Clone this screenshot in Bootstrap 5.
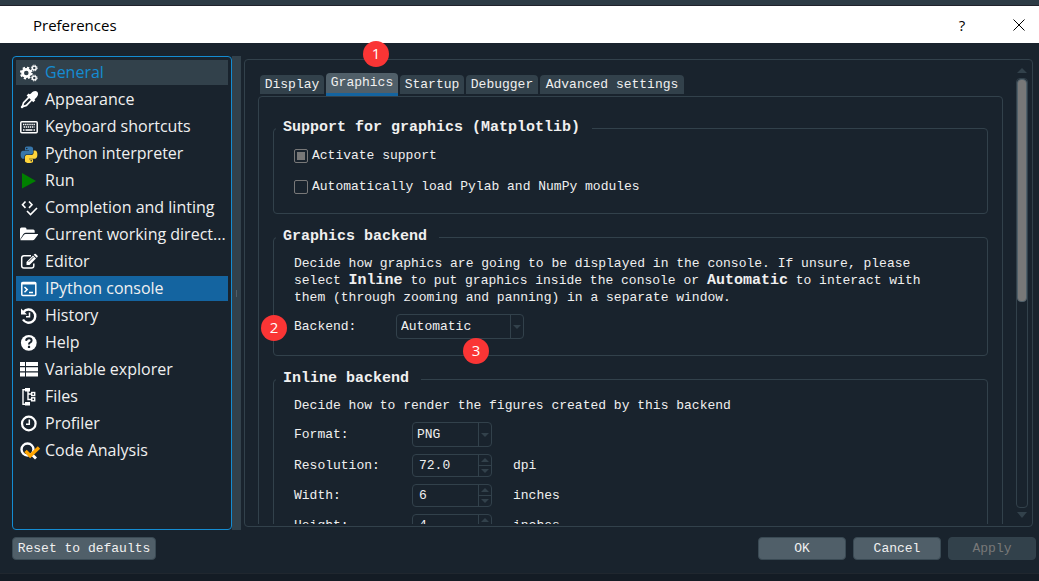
<!DOCTYPE html>
<html lang="en">
<head>
<meta charset="utf-8">
<meta name="viewport" content="width=device-width, initial-scale=1">
<title>Preferences</title>
<link href="https://cdn.jsdelivr.net/npm/bootstrap@5.3.0/dist/css/bootstrap.min.css" rel="stylesheet">
<style>
:root { --base:#19232d; --line:#32414b; --btn:#505f69; --txt:#f0f0f0; --blue:#1464a0; --sky:#148cd2; }
body { background:var(--base); color:var(--txt); font:13px/20px "Liberation Mono", monospace; overflow:hidden; }
.strip-top { height:6px; background:#2d3b45; border-bottom:1px solid #20222b; }
.strip-bottom { height:8px; background:#141c25; border-top:1px solid #20272f; }
.titlebar { height:37px; background:#fff; color:#000; font:15px/20px "Open Sans", sans-serif; padding:0 12px 0 33px; gap:41px; }
.titlebar button { border:0; background:none; padding:0; color:#000; width:16px; height:24px; font:15px/24px "Open Sans", sans-serif; }
.titlebar svg { display:block; margin:auto; }
.work { padding:13px 6px 0 12px; min-height:0; }
.side { width:220px; border:1px solid var(--sky); border-radius:4px; padding:3px; }
.side a { height:25px; margin-bottom:2px; padding:0 4px; gap:7px; color:var(--txt); text-decoration:none; font:16px/25px "Open Sans", sans-serif; white-space:nowrap; }
.side a.hovered { background:var(--line); color:var(--sky); }
.side a.active { background:var(--blue); }
.side svg { width:18px; height:18px; flex:none; }
.splitter { width:9px; background:var(--line); }
.splitter i { width:1px; height:7px; background:#505f69; }
.panel { margin:3px 0 3px 3px; border:1px solid var(--line); border-radius:4px; padding:2px; min-width:0; }
.view { overflow:hidden; padding:11px 13px 0 11px; }
.tabs { gap:2px; padding-left:2px; height:23px; }
.tabs button { border:0; background:var(--line); color:var(--txt); padding:0 3px; height:19px; margin-bottom:2px; line-height:20px; border-radius:4px 4px 0 0; text-align:center; white-space:nowrap; }
.tabs button.active { background:var(--btn); height:23px; margin:0; border-bottom:3px solid var(--blue); }
.w-s { width:64px; } .w-m { width:72px; } .w-l { width:144px; }
.pane { border:1px solid var(--line); border-radius:4px; padding:21px 14px 0; height:600px; }
fieldset { border:1px solid var(--line) !important; border-radius:4px; padding:0 2px; margin-bottom:13px; }
legend { float:none; width:auto; margin:0; padding:0 12px 0 7px; font-size:15px; line-height:20px; font-weight:700; }
.inside { padding:8px 18px 16px; }
strong { font-size:15px; line-height:17px; }
.hint { line-height:17px; margin:0 0 8px; }
.ticks { gap:11px; }
.tick { gap:4px; height:20px; }
.tick input { width:14px; height:14px; margin:0; border:1px solid #787878; border-radius:2px; background:transparent; appearance:none; }
.tick input.partial { background:#787878 content-box; padding:2px; }
.combo, .spin { position:relative; border:1px solid var(--line); border-radius:4px; height:25px; width:80px; }
.combo.wide { width:128px; }
.spin { height:23px; }
.combo select, .spin input { border:0; background:transparent; color:var(--txt); appearance:none; padding:0 4px; flex:1; min-width:0; font-size:13px; outline:0; }
.spin input { padding-left:6px; }
.arrow { width:13px; border-left:1px solid var(--line); }
.spin .arrow button { border:0; background:none; padding:0; flex:1; width:12px; line-height:0; }
.spin .arrow button + button { border-top:1px solid var(--line); }
.arrow svg { width:8px; height:4px; fill:var(--line); }
.backend-label { width:102px; }
.form-grid { display:grid; grid-template-columns:118px 80px 1fr; row-gap:7px; align-items:center; }
.form-grid .unit { padding-left:21px; }
.pin { position:absolute; width:26px; height:26px; border-radius:50%; background:#fa3535; color:#fff; font:15px/24px "Open Sans", sans-serif; text-align:center; z-index:2; }
.pin-tab { left:118px; top:-19px; }
.pin-label { left:-33px; top:1px; }
.pin-combo { left:66px; top:23px; }
.scroller { width:12px; padding:6px 0 6px; margin-right:2px; }
.scroller svg { width:10px; height:6px; fill:var(--line); flex:none; }
.track { width:12px; border:1px solid var(--line); border-radius:4px; margin:4px 0; }
.thumb { height:52%; background:#787878; border:1px solid #50606a; border-radius:4px; }
.foot { padding:7px 3px 13px 12px; gap:7px; }
.foot button { height:23px; width:88px; border:1px solid #3a4a54; border-radius:4px; background:var(--btn); color:var(--txt); padding:0; line-height:21px; }
.foot .reset { width:144px; }
.foot button:disabled { background:var(--line); border-color:var(--line); color:#787878; }
</style>
</head>
<body>
<div class="d-flex flex-column vh-100">
  <div class="strip-top flex-shrink-0"></div>
  <header class="titlebar d-flex align-items-center flex-shrink-0">
    <span class="me-auto">Preferences</span>
    <button type="button" aria-label="Help">?</button>
    <button type="button" aria-label="Close"><svg width="12" height="12" viewBox="0 0 12 12" stroke="#000" fill="none"><path d="M.5.5l11 11M11.5.5l-11 11"/></svg></button>
  </header>

  <main class="work d-flex flex-grow-1">
    <nav class="side flex-shrink-0">
      <a href="#" class="hovered d-flex align-items-center"><svg viewBox="0 0 18 18" fill="none" stroke="#fff"><circle cx="6.3" cy="9" r="3.7" stroke-width="2.8"/><circle cx="6.3" cy="9" r="5.4" stroke-width="2" stroke-dasharray="2.3 1.94"/><circle cx="14.3" cy="4" r="1.9" stroke-width="1.4"/><circle cx="14.3" cy="4" r="2.9" stroke-width="1" stroke-dasharray="1.3 .98"/><circle cx="14.3" cy="14" r="1.9" stroke-width="1.4"/><circle cx="14.3" cy="14" r="2.9" stroke-width="1" stroke-dasharray="1.3 .98"/></svg>General</a>
      <a href="#" class="d-flex align-items-center"><svg viewBox="0 0 18 18"><path fill="#fff" d="M11 2.500c2.500-3 5-2.800 6.200-1.700S18.500 4.500 16 7l-1.500 1.200.8 1-2 2-6.700-6.700 2-2 1 .8z"/><path d="M9 6.200L3.600 11.600 2.300 15.700l4.100-1.300L11.700 9" fill="none" stroke="#fff" stroke-width="1.700"/><path d="M2.500 14l1.600 1.600L2 17.500.6 16z" fill="#fff"/></svg>Appearance</a>
      <a href="#" class="d-flex align-items-center"><svg viewBox="0 0 18 18"><rect x=".8" y="3.700" width="16.400" height="11" rx="1" fill="none" stroke="#fff" stroke-width="1.500"/><path stroke="#fff" stroke-width="1.300" d="M3 6.500h12M3.600 9h11" stroke-dasharray="1.400 .7"/><path stroke="#fff" stroke-width="1.400" d="M3 12h1.500M5.500 12h7M13.500 12H15"/></svg>Keyboard shortcuts</a>
      <a href="#" class="d-flex align-items-center"><svg viewBox="-1 -2 26 26"><path fill="#3776ab" d="M14.250.180l.9.2.730.260.590.3.450.320.340.340.250.340.160.330.1.3.040.260.020.2-.010.130V8.500l-.050.630-.130.550-.210.460-.260.380-.3.310-.330.250-.350.190-.350.140-.330.1-.3.070-.260.040-.210.020H8.770l-.690.050-.590.140-.5.220-.410.270-.330.320-.270.350-.2.360-.150.370-.1.350-.070.320-.040.270-.020.210v3.060H3.170l-.210-.030-.280-.070-.320-.120-.350-.180-.360-.260-.360-.360-.350-.460-.320-.590-.280-.730-.210-.880-.140-1.050-.050-1.230.060-1.220.160-1.040.240-.870.320-.710.360-.570.4-.440.420-.330.420-.240.4-.160.360-.1.320-.050.240-.010h.160l.060.010h8.160v-.830H6.180l-.010-2.750-.020-.370.050-.340.110-.310.170-.280.250-.260.310-.230.380-.2.440-.180.510-.150.580-.120.640-.1.710-.060.770-.040.840-.020 1.270.050z"/><circle cx="8.800" cy="3.100" r="1.100" fill="#19232d"/><g transform="rotate(180 12 12)"><path fill="#ffd43b" d="M14.250.180l.9.2.730.260.590.3.450.320.340.340.250.340.160.330.1.3.040.260.020.2-.010.130V8.500l-.050.630-.130.550-.210.460-.260.380-.3.310-.330.250-.350.190-.350.140-.330.1-.3.070-.260.040-.210.020H8.770l-.690.050-.590.140-.5.220-.410.270-.330.320-.270.350-.2.360-.150.370-.1.350-.070.320-.040.270-.020.210v3.060H3.170l-.210-.030-.280-.070-.320-.120-.350-.180-.360-.260-.360-.360-.350-.460-.320-.590-.280-.730-.210-.880-.140-1.050-.050-1.230.060-1.220.160-1.040.240-.870.320-.710.360-.570.4-.440.420-.330.420-.240.4-.160.360-.1.320-.050.240-.010h.160l.060.010h8.160v-.830H6.180l-.010-2.750-.020-.370.050-.340.110-.310.170-.280.250-.260.310-.230.380-.2.440-.180.510-.150.580-.120.640-.1.710-.060.770-.040.840-.020 1.270.050z"/><circle cx="8.800" cy="3.100" r="1.100" fill="#19232d"/></g></svg>Python interpreter</a>
      <a href="#" class="d-flex align-items-center"><svg viewBox="0 0 18 18"><path fill="#008000" d="M2 1l14 8L2 16.500z"/></svg>Run</a>
      <a href="#" class="d-flex align-items-center"><svg viewBox="0 0 18 18" fill="none" stroke="#fff" stroke-width="1.600"><path d="M5.500 2.500L2.500 5.700l3 3.200M9 2.500l3 3.200-3 3.200M7 12l3.500 3.500L17 9"/></svg>Completion and linting</a>
      <a href="#" class="d-flex align-items-center"><svg viewBox="0 0 18 18" fill="#fff"><path d="M0 13.500V3q0-1.500 1.500-1.500h3.700Q6.500 1.500 6.500 3v.5h6.700q1.500 0 1.500 1.500v1.700H6q-1.500 0-2.600 1.200z"/><path d="M5.600 8h12q1 0 .2 1l-3.200 4.300q-.7 1-2 1H1q-1 0-.3-1l3.100-4.200Q4.600 8 5.600 8z"/></svg>Current working direct...</a>
      <a href="#" class="d-flex align-items-center"><svg viewBox="0 0 18 18"><path d="M11 2.700H4Q1.700 2.700 1.700 5v7.700Q1.700 15 4 15h7.500q2.300 0 2.300-2.300V10.500" fill="none" stroke="#fff" stroke-width="1.500"/><path fill="#fff" d="M6.500 12V9L13 2.500l3 3L9.500 12zM13.700 1.800l.8-.8q.7-.5 1.300 0l1.700 1.700q.5.700 0 1.300l-.8.800z"/><path stroke="#19232d" stroke-width=".8" d="M8.500 9l5-5"/></svg>Editor</a>
      <a href="#" class="active d-flex align-items-center" aria-current="page"><svg viewBox="0 0 18 18" fill="none" stroke="#fff"><rect x="1.800" y="2.500" width="14" height="13" rx="1" stroke-width="1.500"/><path d="M1.500 3.500h14.500" stroke-width="2"/><path d="M4.500 7l2.700 2.600-2.700 2.600M9 12.500h4" stroke-width="1.500"/></svg>IPython console</a>
      <a href="#" class="d-flex align-items-center"><svg viewBox="0 0 18 18"><path d="M3.500 5A6.600 6.600 0 1 1 3 12.500" fill="none" stroke="#fff" stroke-width="2.400"/><path fill="#fff" d="M1 1.500v6h6z"/><path d="M9.500 5.500v4.300H6" fill="none" stroke="#fff" stroke-width="1.500"/></svg>History</a>
      <a href="#" class="d-flex align-items-center"><svg viewBox="0 0 18 18"><circle cx="8.800" cy="8.800" r="7.900" fill="#fff"/><path d="M6 6.800Q6.500 4.300 9 4.300t2.600 2.200Q11.600 8 10 8.600 9 9 9 10.500" fill="none" stroke="#19232d" stroke-width="2"/><path fill="#19232d" d="M7.900 11.800h2.200V14H7.900z"/></svg>Help</a>
      <a href="#" class="d-flex align-items-center"><svg viewBox="0 0 18 18" fill="#fff"><path d="M0 1h5v4H0zM6 1h12v4H6zM0 6.200h5v4H0zM6 6.200h12v4H6zM0 11.400h5v4H0zM6 11.400h12v4H6z"/></svg>Variable explorer</a>
      <a href="#" class="d-flex align-items-center"><svg viewBox="0 0 18 18" fill="none" stroke="#fff"><path d="M5.500 1.700H3v14.500h2.500M8 3v8.500h3M8 6h3" stroke-width="1.400"/><path fill="#fff" stroke="none" d="M5 0h5v3.500H5zM5 14h5v3.500H5z"/><rect x="11.700" y="4.500" width="3" height="3" stroke-width="1.400"/><rect x="11.700" y="9.800" width="3" height="3" stroke-width="1.400"/></svg>Files</a>
      <a href="#" class="d-flex align-items-center"><svg viewBox="0 0 18 18" fill="none" stroke="#fff"><circle cx="8.800" cy="8.500" r="6.800" stroke-width="2.200"/><path d="M9.300 4.500v4.800H6" stroke-width="1.500"/></svg>Profiler</a>
      <a href="#" class="d-flex align-items-center"><svg viewBox="0 0 18 18" fill="none" overflow="visible"><circle cx="7.500" cy="7.500" r="6" stroke="#fff" stroke-width="2.400"/><path d="M11 11.500l5 5" stroke="#fff" stroke-width="2.800"/><path d="M5.500 9l4.700 4.800L19 5.500" stroke="#ffa500" stroke-width="3.400"/></svg>Code Analysis</a>
    </nav>
    <div class="splitter d-flex align-items-center justify-content-center flex-shrink-0"><i></i></div>

    <section class="panel position-relative d-flex flex-grow-1">
      <span class="pin pin-tab">1</span>
      <div class="view flex-grow-1">
        <div class="tabs d-flex align-items-end" role="tablist">
          <button type="button" class="w-s" role="tab">Display</button>
          <button type="button" class="w-m active" role="tab" aria-selected="true">Graphics</button>
          <button type="button" class="w-s" role="tab">Startup</button>
          <button type="button" class="w-m" role="tab">Debugger</button>
          <button type="button" class="w-l" role="tab">Advanced settings</button>
        </div>
        <div class="pane">
          <fieldset>
            <legend>Support for graphics (Matplotlib)</legend>
            <div class="inside ticks d-flex flex-column">
              <div class="tick d-flex align-items-center"><input type="checkbox" id="act" class="partial" checked><label for="act">Activate support</label></div>
              <div class="tick d-flex align-items-center"><input type="checkbox" id="pylab"><label for="pylab">Automatically load Pylab and NumPy modules</label></div>
            </div>
          </fieldset>
          <fieldset>
            <legend>Graphics backend</legend>
            <div class="inside">
              <p class="hint">Decide how graphics are going to be displayed in the console. If unsure, please<br>select <strong>Inline</strong> to put graphics inside the console or <strong>Automatic</strong> to interact with<br>them (through zooming and panning) in a separate window.</p>
              <div class="d-flex align-items-center position-relative">
                <span class="pin pin-label">2</span>
                <label for="backend" class="backend-label">Backend:</label>
                <div class="combo wide d-flex">
                  <select id="backend"><option>Automatic</option></select>
                  <span class="arrow d-flex align-items-center justify-content-center"><svg viewBox="0 0 8 4"><path d="M0 0h8L4 4z"/></svg></span>
                  <span class="pin pin-combo">3</span>
                </div>
              </div>
            </div>
          </fieldset>
          <fieldset>
            <legend>Inline backend</legend>
            <div class="inside">
              <p class="hint">Decide how to render the figures created by this backend</p>
              <div class="form-grid">
                <label for="fmt">Format:</label>
                <div class="combo d-flex"><select id="fmt"><option>PNG</option></select><span class="arrow d-flex align-items-center justify-content-center"><svg viewBox="0 0 8 4"><path d="M0 0h8L4 4z"/></svg></span></div>
                <span></span>
                <label for="res">Resolution:</label>
                <div class="spin d-flex"><input id="res" value="72.0"><span class="arrow d-flex flex-column"><button type="button" aria-label="Increase"><svg viewBox="0 0 8 4"><path d="M0 4h8L4 0z"/></svg></button><button type="button" aria-label="Decrease"><svg viewBox="0 0 8 4"><path d="M0 0h8L4 4z"/></svg></button></span></div>
                <span class="unit">dpi</span>
                <label for="wid">Width:</label>
                <div class="spin d-flex"><input id="wid" value="6"><span class="arrow d-flex flex-column"><button type="button" aria-label="Increase"><svg viewBox="0 0 8 4"><path d="M0 4h8L4 0z"/></svg></button><button type="button" aria-label="Decrease"><svg viewBox="0 0 8 4"><path d="M0 0h8L4 4z"/></svg></button></span></div>
                <span class="unit">inches</span>
                <label for="hei">Height:</label>
                <div class="spin d-flex"><input id="hei" value="4"><span class="arrow d-flex flex-column"><button type="button" aria-label="Increase"><svg viewBox="0 0 8 4"><path d="M0 4h8L4 0z"/></svg></button><button type="button" aria-label="Decrease"><svg viewBox="0 0 8 4"><path d="M0 0h8L4 4z"/></svg></button></span></div>
                <span class="unit">inches</span>
              </div>
            </div>
          </fieldset>
        </div>
      </div>
      <div class="scroller d-flex flex-column align-items-center flex-shrink-0">
        <svg viewBox="0 0 10 6"><path d="M0 5h10L5 0z"/></svg>
        <div class="track flex-grow-1"><div class="thumb"></div></div>
        <svg viewBox="0 0 10 6"><path d="M0 0h10L5 6z"/></svg>
      </div>
    </section>
  </main>

  <footer class="foot d-flex flex-shrink-0">
    <button type="button" class="reset me-auto">Reset to defaults</button>
    <button type="button">OK</button>
    <button type="button">Cancel</button>
    <button type="button" disabled>Apply</button>
  </footer>
  <div class="strip-bottom flex-shrink-0"></div>
</div>
<script src="https://cdn.jsdelivr.net/npm/bootstrap@5.3.0/dist/js/bootstrap.bundle.min.js"></script>
</body>
</html>
